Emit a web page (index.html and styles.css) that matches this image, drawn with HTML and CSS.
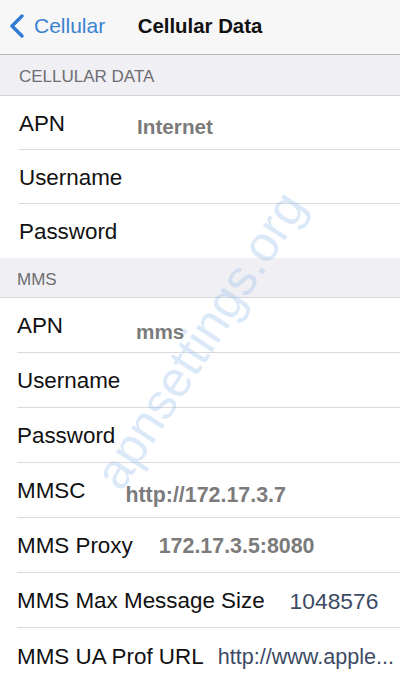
FILE: index.html
```html
<!DOCTYPE html>
<html>
<head>
<meta charset="utf-8">
<link rel="stylesheet" href="styles.css">
</head>
<body>
<div class="screen">
  <header class="nav">
    <div class="back">
      <svg class="chev" width="16" height="24" viewBox="0 0 16 24"><path d="M13 2 L3 12 L13 22" fill="none" stroke="#2f7bd6" stroke-width="3.4" stroke-linecap="round" stroke-linejoin="round"/></svg>
      <span class="back-text">Cellular</span>
    </div>
    <div class="title">Cellular Data</div>
  </header>

  <div class="section-head s1">CELLULAR DATA</div>
  <div class="group g1">
    <div class="row"><div class="inner"><span class="label">APN</span><span class="val gray v-apn1">Internet</span></div></div>
    <div class="row"><div class="inner"><span class="label">Username</span></div></div>
    <div class="row last"><div class="inner"><span class="label">Password</span></div></div>
  </div>

  <div class="section-head s2">MMS</div>
  <div class="group g2">
    <div class="row"><div class="inner"><span class="label">APN</span><span class="val gray v-apn2">mms</span></div></div>
    <div class="row"><div class="inner"><span class="label">Username</span></div></div>
    <div class="row"><div class="inner"><span class="label">Password</span></div></div>
    <div class="row"><div class="inner"><span class="label">MMSC</span><span class="val gray big v-mmsc">http://172.17.3.7</span></div></div>
    <div class="row"><div class="inner"><span class="label">MMS Proxy</span><span class="val gray big v-proxy">172.17.3.5:8080</span></div></div>
    <div class="row"><div class="inner"><span class="label">MMS Max Message Size</span><span class="val blue v-size">1048576</span></div></div>
    <div class="row last"><div class="inner"><span class="label">MMS UA Prof URL</span><span class="val blue v-url">http://www.apple...</span></div></div>
  </div>

  <div class="watermark">apnsettings.org</div>
</div>
</body>
</html>
```

FILE: styles.css
```css
* { box-sizing: border-box; }
html, body { margin: 0; padding: 0; }
body {
  width: 400px;
  height: 680px;
  overflow: hidden;
  background: #ffffff;
  font-family: "Liberation Sans", Arial, Helvetica, sans-serif;
  color: #111111;
}
.screen { position: relative; width: 400px; height: 680px; overflow: hidden; }

.nav {
  height: 55px;
  background: #f7f7f7;
  border-bottom: 1px solid #b9b9bc;
  display: flex;
  align-items: center;
  position: relative;
}
.back {
  display: flex;
  align-items: center;
  padding-left: 9px;
  color: #3b82d0;
  font-size: 21px;
  margin-top: -2px;
}
.chev { display: block; margin-right: 9px; }
.title {
  position: absolute;
  left: 0; right: 0;
  top: 0; bottom: 0;
  display: flex;
  align-items: center;
  justify-content: center;
  font-weight: bold;
  font-size: 20.4px;
  color: #111;
  margin-top: -1px;
  pointer-events: none;
}

.section-head {
  background: #efeff4;
  color: #6d6d72;
  font-size: 17px;
  display: flex;
  align-items: center;
  border-bottom: 1px solid #d6d6da;
}
.s1 { height: 41px; padding-left: 19px; padding-top: 4px; }
.s2 { height: 40px; padding-left: 17px; padding-top: 4px; }

.group { background: #fff; }
.g1 .row { padding-left: 19px; height: 54px; }
.g2 .row { padding-left: 17px; height: 55px; }
.row .inner {
  height: 100%;
  border-bottom: 1px solid #dadade;
  display: flex;
  align-items: center;
  white-space: nowrap;
  overflow: hidden;
}
.row.last .inner { border-bottom: none; }

.label { font-size: 22.4px; color: #111; margin-top: 2px; }

.val { white-space: nowrap; }
.gray { color: #7b7b7b; font-weight: bold; font-size: 20.7px; }
.gray.big { font-size: 21.4px; }
.blue { color: #3d4b65; }

.v-apn1 { margin-left: 72px; margin-top: 8px; }
.v-apn2 { margin-left: 73px; margin-top: 13px; }
.v-mmsc { margin-left: 40px; margin-top: 11px; }
.v-proxy { margin-left: 26px; margin-top: 2px; }
.v-size { margin-left: 25px; font-size: 22.8px; margin-top: 2px; }
.v-url { margin-left: 14px; font-size: 21.6px; overflow: hidden; margin-top: 2px; }

.watermark {
  position: absolute;
  left: 200px;
  top: 340px;
  transform: translate(-50%, -50%) rotate(-57deg);
  font-size: 50px;
  color: rgba(160, 195, 235, 0.38);
  white-space: nowrap;
  pointer-events: none;
  font-family: "Liberation Sans", Arial, sans-serif;
}
```
